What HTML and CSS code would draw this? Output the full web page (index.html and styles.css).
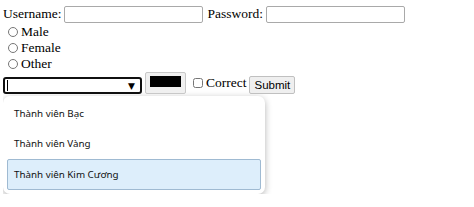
FILE: index.html
```html
<!DOCTYPE html>
<html>
<head>
	<meta charset="utf-8">
	<title>Form</title>
	<link rel="stylesheet" href="styles.css">
</head>
<body>
	<form class="form">
		<!-- tài khoản -->
		<div class="row">
			<label>Username:</label>
			<input type="text" class="txt">
			<label>Password:</label>
			<input type="password" class="txt">
		</div>

		<!-- giới tính -->
		<div class="radio"><input type="radio" name="sex"><span>Male</span></div>
		<div class="radio"><input type="radio" name="sex"><span>Female</span></div>
		<div class="radio"><input type="radio" name="sex"><span>Other</span></div>

		<div class="row last">
			<div class="select"><span class="caret">&#9660;</span></div>
			<div class="color"><span class="swatch"></span></div>
			<input type="checkbox" class="chk">
			<span>Correct</span>
			<button type="button" class="btn">Submit</button>
		</div>
	</form>

	<!-- danh sách mở -->
	<div class="options">
		<div class="opt">Thành viên Bạc</div>
		<div class="opt">Thành viên Vàng</div>
		<div class="opt active">Thành viên Kim Cương</div>
	</div>
</body>
</html>
```

FILE: styles.css
```css
* {
	margin: 0;
	padding: 0;
	box-sizing: border-box;
}

body {
	margin: 3px;
	font-family: "Liberation Serif", serif;
	font-size: 13.5px;
	line-height: 16px;
	color: #000;
	background: #fff;
}

.row {
	display: flex;
	align-items: center;
	height: 20px;
	padding-top: 2px;
}

.row label {
	margin-right: 3px;
}

.txt {
	width: 139px;
	height: 17px;
	border: 1px solid #a9a9a9;
	border-radius: 2px;
	margin-right: 4px;
	outline: none;
}

.radio {
	display: flex;
	align-items: center;
	height: 16px;
	padding-top: 1px;
}

.radio input {
	width: 10px;
	height: 10px;
	margin: 0 3px 0 5px;
}

.last {
	height: 24px;
	padding-top: 0;
}

.select {
	width: 139px;
	height: 17px;
	margin-top: 5px;
	border: 2px solid #101010;
	border-radius: 3px;
	position: relative;
	display: flex;
	justify-content: flex-end;
	align-items: center;
	padding-right: 5px;
}

.select::before {
	content: "";
	position: absolute;
	left: 2px;
	top: 1px;
	width: 1px;
	height: 11px;
	background: #000;
}

.caret {
	font-family: "DejaVu Sans", sans-serif;
	font-size: 9px;
	line-height: 10px;
}

.color {
	width: 41px;
	height: 22px;
	margin-left: 3px;
	border: 1px solid #c8c8c8;
	border-radius: 2px;
	background: #f0f0f0;
	padding: 3px 4px 6px;
}

.swatch {
	display: block;
	width: 100%;
	height: 100%;
	background: #000;
}

.chk {
	width: 10px;
	height: 10px;
	margin: 0 3px 0 7px;
}

.btn {
	margin-left: 3px;
	margin-top: 3px;
	height: 18px;
	padding: 0 4px;
	font-family: "Liberation Sans", sans-serif;
	font-size: 11.5px;
	background: #efefef;
	border: 1px solid #c0c0c0;
	border-radius: 2px;
	color: #000;
}

/* danh sách mở */
.options {
	width: 262px;
	margin-top: 1px;
	padding: 3px 4px 4px;
	background: #fff;
	border-radius: 7px;
	box-shadow: 0 2px 7px rgba(0, 0, 0, 0.3);
	font-family: "Noto Sans", sans-serif;
	font-size: 9.8px;
	color: #111;
}

.opt {
	height: 30px;
	line-height: 27px;
	padding-left: 6px;
	border: 1px solid transparent;
}

.opt.active {
	height: 31px;
	line-height: 29px;
	background: #ddeefb;
	border-color: #9fbad2;
	border-radius: 2px;
}
```
